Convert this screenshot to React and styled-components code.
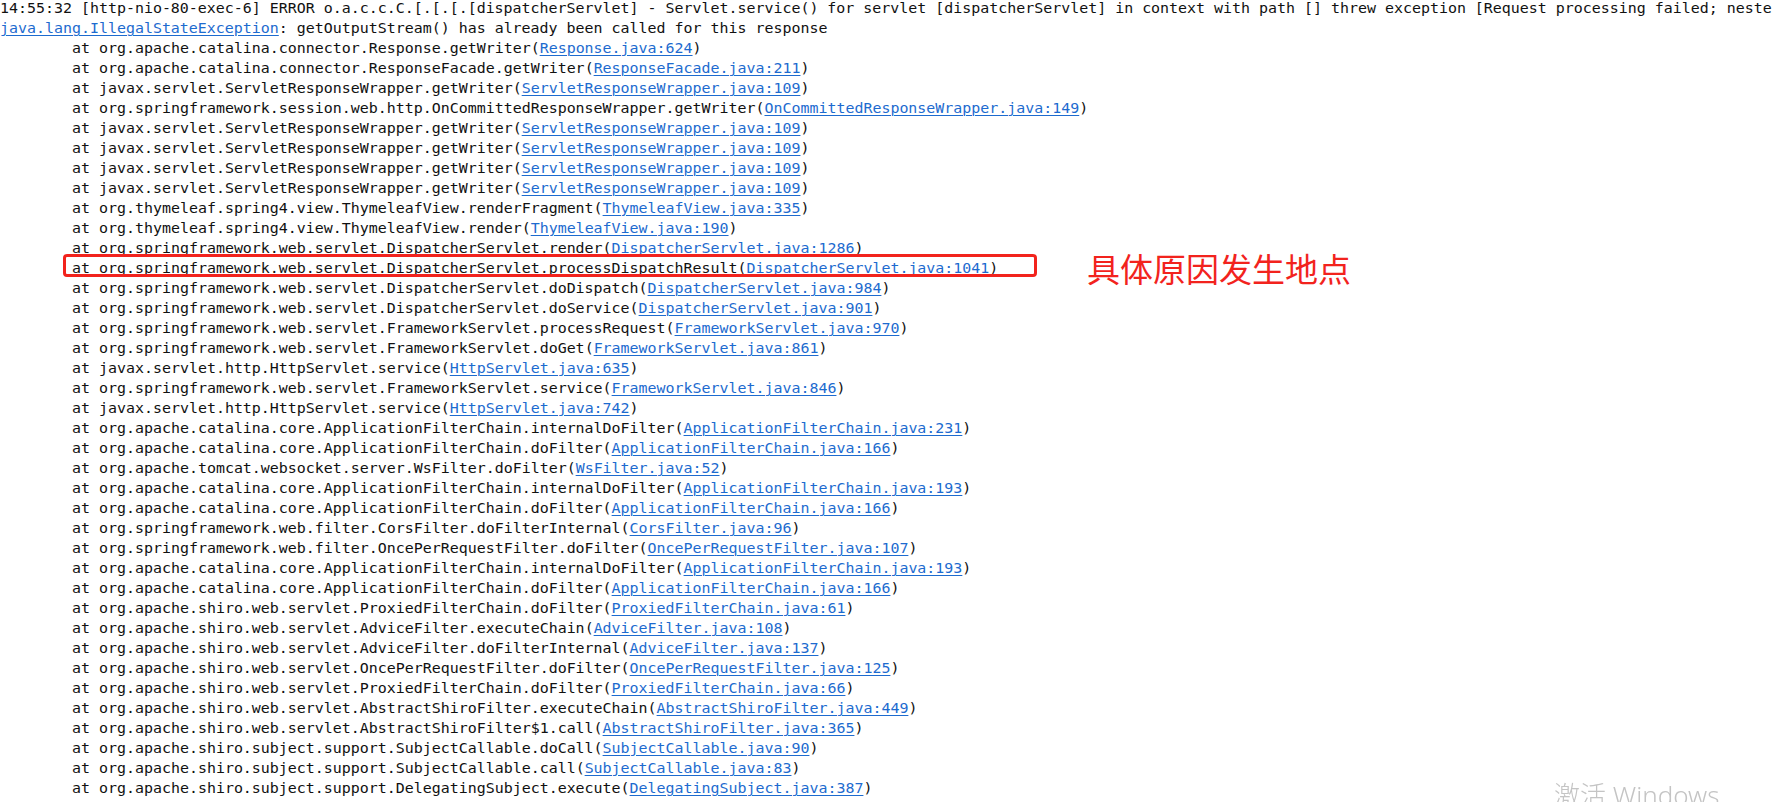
import styled, { createGlobalStyle } from "styled-components";

const GlobalStyle = createGlobalStyle`
  html, body {
    margin: 0;
    padding: 0;
    background: #ffffff;
    overflow: hidden;
  }
  body {
    width: 1772px;
    height: 802px;
  }
`;

// stack frames: [method, source link, marked]
const frames = [
  ["org.apache.catalina.connector.Response.getWriter", "Response.java:624"],
  ["org.apache.catalina.connector.ResponseFacade.getWriter", "ResponseFacade.java:211"],
  ["javax.servlet.ServletResponseWrapper.getWriter", "ServletResponseWrapper.java:109"],
  ["org.springframework.session.web.http.OnCommittedResponseWrapper.getWriter", "OnCommittedResponseWrapper.java:149"],
  ["javax.servlet.ServletResponseWrapper.getWriter", "ServletResponseWrapper.java:109"],
  ["javax.servlet.ServletResponseWrapper.getWriter", "ServletResponseWrapper.java:109"],
  ["javax.servlet.ServletResponseWrapper.getWriter", "ServletResponseWrapper.java:109"],
  ["javax.servlet.ServletResponseWrapper.getWriter", "ServletResponseWrapper.java:109"],
  ["org.thymeleaf.spring4.view.ThymeleafView.renderFragment", "ThymeleafView.java:335"],
  ["org.thymeleaf.spring4.view.ThymeleafView.render", "ThymeleafView.java:190"],
  ["org.springframework.web.servlet.DispatcherServlet.render", "DispatcherServlet.java:1286"],
  ["org.springframework.web.servlet.DispatcherServlet.processDispatchResult", "DispatcherServlet.java:1041", true],
  ["org.springframework.web.servlet.DispatcherServlet.doDispatch", "DispatcherServlet.java:984"],
  ["org.springframework.web.servlet.DispatcherServlet.doService", "DispatcherServlet.java:901"],
  ["org.springframework.web.servlet.FrameworkServlet.processRequest", "FrameworkServlet.java:970"],
  ["org.springframework.web.servlet.FrameworkServlet.doGet", "FrameworkServlet.java:861"],
  ["javax.servlet.http.HttpServlet.service", "HttpServlet.java:635"],
  ["org.springframework.web.servlet.FrameworkServlet.service", "FrameworkServlet.java:846"],
  ["javax.servlet.http.HttpServlet.service", "HttpServlet.java:742"],
  ["org.apache.catalina.core.ApplicationFilterChain.internalDoFilter", "ApplicationFilterChain.java:231"],
  ["org.apache.catalina.core.ApplicationFilterChain.doFilter", "ApplicationFilterChain.java:166"],
  ["org.apache.tomcat.websocket.server.WsFilter.doFilter", "WsFilter.java:52"],
  ["org.apache.catalina.core.ApplicationFilterChain.internalDoFilter", "ApplicationFilterChain.java:193"],
  ["org.apache.catalina.core.ApplicationFilterChain.doFilter", "ApplicationFilterChain.java:166"],
  ["org.springframework.web.filter.CorsFilter.doFilterInternal", "CorsFilter.java:96"],
  ["org.springframework.web.filter.OncePerRequestFilter.doFilter", "OncePerRequestFilter.java:107"],
  ["org.apache.catalina.core.ApplicationFilterChain.internalDoFilter", "ApplicationFilterChain.java:193"],
  ["org.apache.catalina.core.ApplicationFilterChain.doFilter", "ApplicationFilterChain.java:166"],
  ["org.apache.shiro.web.servlet.ProxiedFilterChain.doFilter", "ProxiedFilterChain.java:61"],
  ["org.apache.shiro.web.servlet.AdviceFilter.executeChain", "AdviceFilter.java:108"],
  ["org.apache.shiro.web.servlet.AdviceFilter.doFilterInternal", "AdviceFilter.java:137"],
  ["org.apache.shiro.web.servlet.OncePerRequestFilter.doFilter", "OncePerRequestFilter.java:125"],
  ["org.apache.shiro.web.servlet.ProxiedFilterChain.doFilter", "ProxiedFilterChain.java:66"],
  ["org.apache.shiro.web.servlet.AbstractShiroFilter.executeChain", "AbstractShiroFilter.java:449"],
  ["org.apache.shiro.web.servlet.AbstractShiroFilter$1.call", "AbstractShiroFilter.java:365"],
  ["org.apache.shiro.subject.support.SubjectCallable.doCall", "SubjectCallable.java:90"],
  ["org.apache.shiro.subject.support.SubjectCallable.call", "SubjectCallable.java:83"],
  ["org.apache.shiro.subject.support.DelegatingSubject.execute", "DelegatingSubject.java:387"],
  ["org.apache.shiro.web.servlet.AbstractShiroFilter.doFilterInternal", "AbstractShiroFilter.java:362"],
];

const Console = styled.div`
  display: flex;
  flex-direction: column;
  margin-top: -2px;
  font-family: "DejaVu Sans Mono", "Liberation Mono", monospace;
  font-size: 14.95px;
  line-height: 20px;
  color: #111111;
  white-space: pre;
`;

const Line = styled.div`
  position: relative;
  height: 20px;
  padding-left: ${({ indent }) => (indent ? "72px" : "0")};
`;

const Link = styled.span`
  color: #1d6bcf;
  text-decoration: underline;
  text-underline-offset: 2px;
  text-decoration-thickness: 1px;
`;

// red frame drawn over the frame that matters
const Highlight = styled.span`
  position: absolute;
  left: 63px;
  top: -4px;
  width: 968px;
  height: 17px;
  border: 3.5px solid #f2231d;
  border-radius: 4px;
  pointer-events: none;
`;

const Note = styled.span`
  position: absolute;
  left: 1087px;
  top: -8px;
  font-family: "Noto Sans CJK SC", sans-serif;
  font-size: 33px;
  line-height: 36px;
  color: #f2231d;
`;

const Watermark = styled.div`
  position: fixed;
  left: 1554px;
  top: 775px;
  font-family: "Noto Sans", "Noto Sans CJK SC", sans-serif;
  font-weight: 300;
  font-size: 26px;
  color: #c4c4c4;
  white-space: nowrap;
`;

const Frame = ({ method, file, marked }) => (
  <Line indent>
    at {method}(<Link>{file}</Link>)
    {marked && (
      <>
        <Highlight />
        <Note>具体原因发生地点</Note>
      </>
    )}
  </Line>
);

export default function App() {
  return (
    <>
      <GlobalStyle />
      <Console>
        <Line>
          14:55:32 [http-nio-80-exec-6] ERROR o.a.c.c.C.[.[.[.[dispatcherServlet] - Servlet.service() for servlet [dispatcherServlet] in context with path [] threw exception [Request processing failed; nested exception is java.lang.IllegalStateException]
        </Line>
        <Line>
          <Link>java.lang.IllegalStateException</Link>: getOutputStream() has already been called for this response
        </Line>
        {frames.map(([method, file, marked], i) => (
          <Frame key={i} method={method} file={file} marked={marked} />
        ))}
      </Console>
      <Watermark>激活 Windows</Watermark>
    </>
  );
}
